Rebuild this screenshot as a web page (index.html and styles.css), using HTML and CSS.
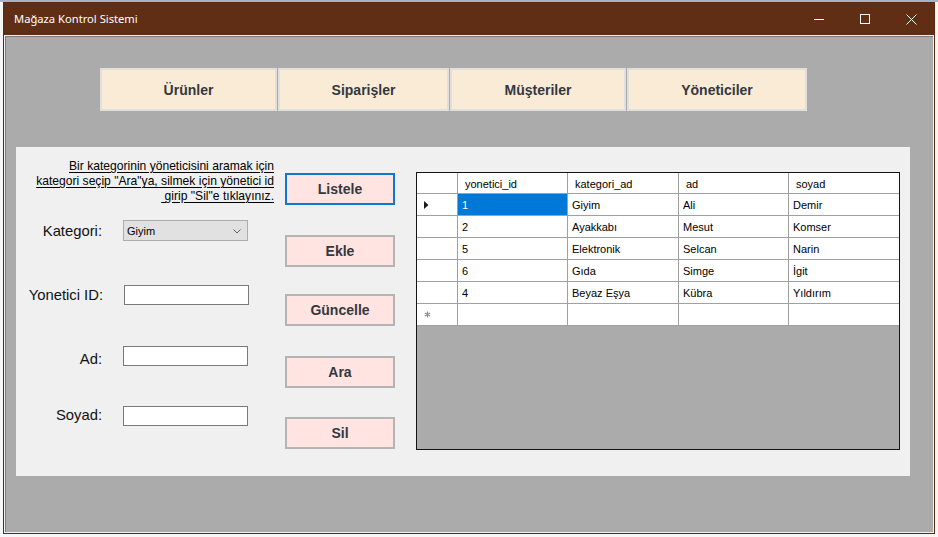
FILE: index.html
```html
<!DOCTYPE html>
<html lang="tr">
<head>
<meta charset="utf-8">
<title>Mağaza Kontrol Sistemi</title>
<link rel="stylesheet" href="styles.css">
</head>
<body>
<div class="window">
  <div class="titlebar">
    <span class="title">Mağaza Kontrol Sistemi</span>
    <div class="controls">
      <span class="ctl"><svg width="10" height="10" viewBox="0 0 10 10"><path d="M0 5.5H10" stroke="#fff" stroke-width="1" fill="none"/></svg></span>
      <span class="ctl"><svg width="10" height="10" viewBox="0 0 10 10"><rect x="0.5" y="0.5" width="9" height="9" stroke="#fff" stroke-width="1" fill="none"/></svg></span>
      <span class="ctl"><svg width="11" height="11" viewBox="0 0 11 11"><path d="M0.5 0.5L10.5 10.5M10.5 0.5L0.5 10.5" stroke="#fff" stroke-width="1" fill="none"/></svg></span>
    </div>
  </div>
  <div class="client">
    <div class="nav">
      <div class="nav-btn nb1">Ürünler</div>
      <div class="nav-btn nb2">Siparişler</div>
      <div class="nav-btn nb3">Müşteriler</div>
      <div class="nav-btn nb4">Yöneticiler</div>
    </div>
    <div class="panel">
      <div class="form-col">
        <p class="hint"><u>Bir kategorinin yöneticisini aramak için</u><br><u>kategori seçip "Ara"ya, silmek için yönetici id</u><br><u> girip "Sil"e tıklayınız.</u></p>
        <div class="row row-kat">
          <span class="lbl">Kategori:</span>
          <div class="combo"><span>Giyim</span><svg width="8" height="5" viewBox="0 0 8 5"><path d="M0.5 0.5L4 4L7.5 0.5" stroke="#606060" stroke-width="1" fill="none"/></svg></div>
        </div>
        <div class="row row-id">
          <span class="lbl lbl-id">Yonetici ID:</span>
          <div class="textbox tb-id"></div>
        </div>
        <div class="row row-ad">
          <span class="lbl lbl-low">Ad:</span>
          <div class="textbox"></div>
        </div>
        <div class="row row-soyad">
          <span class="lbl lbl-low2">Soyad:</span>
          <div class="textbox"></div>
        </div>
      </div>
      <div class="btn-col">
        <div class="act act-focus b-listele">Listele</div>
        <div class="act b-ekle">Ekle</div>
        <div class="act b-guncelle">Güncelle</div>
        <div class="act b-ara">Ara</div>
        <div class="act b-sil">Sil</div>
      </div>
      <div class="grid">
        <div class="cell rh"></div>
        <div class="cell hd">yonetici_id</div>
        <div class="cell hd">kategori_ad</div>
        <div class="cell hd">ad</div>
        <div class="cell hd last">soyad</div>

        <div class="cell rh"><svg width="5" height="8" viewBox="0 0 5 8"><path d="M0 0L4.5 4L0 8Z" fill="#1a1a1a"/></svg></div>
        <div class="cell sel">1</div>
        <div class="cell">Giyim</div>
        <div class="cell">Ali</div>
        <div class="cell last">Demir</div>

        <div class="cell rh"></div>
        <div class="cell">2</div>
        <div class="cell">Ayakkabı</div>
        <div class="cell">Mesut</div>
        <div class="cell last">Komser</div>

        <div class="cell rh"></div>
        <div class="cell">5</div>
        <div class="cell">Elektronik</div>
        <div class="cell">Selcan</div>
        <div class="cell last">Narin</div>

        <div class="cell rh"></div>
        <div class="cell">6</div>
        <div class="cell">Gıda</div>
        <div class="cell">Simge</div>
        <div class="cell last">İgit</div>

        <div class="cell rh"></div>
        <div class="cell">4</div>
        <div class="cell">Beyaz Eşya</div>
        <div class="cell">Kübra</div>
        <div class="cell last">Yıldırım</div>

        <div class="cell rh"><svg width="7" height="7" viewBox="0 0 7 7"><path d="M3.5 0.5V6.5M0.8 2L6.2 5M6.2 2L0.8 5" stroke="#8a8a8a" stroke-width="1.2" fill="none"/></svg></div>
        <div class="cell"></div>
        <div class="cell"></div>
        <div class="cell"></div>
        <div class="cell last"></div>
      </div>
    </div>
  </div>
</div>
</body>
</html>
```

FILE: styles.css
```css
* { box-sizing: border-box; }

html, body {
  margin: 0;
  padding: 0;
}

body {
  width: 938px;
  height: 537px;
  overflow: hidden;
  background: linear-gradient(#aab3c6 0 2px, #f6f6f6 2px);
  font-family: "Liberation Sans", Arial, sans-serif;
  padding: 2px 0 0 3px;
}

.window {
  width: 932px;
  height: 532px;
  border: 1px solid #5a2b12;
  background: #ababab;
  display: flex;
  flex-direction: column;
}

.titlebar {
  height: 32px;
  flex: none;
  background: #602e15;
  display: flex;
  align-items: center;
  justify-content: space-between;
}

.title {
  font-family: "Noto Sans", "Open Sans", sans-serif;
  font-size: 11.2px;
  color: #ffffff;
  padding-left: 10px;
  padding-bottom: 1px;
}

.controls {
  display: flex;
  height: 100%;
}

.ctl {
  width: 46px;
  height: 100%;
  display: flex;
  align-items: center;
  justify-content: center;
}

.client {
  flex: 1;
  border: 1px solid #efefef;
  box-shadow: inset 1px 1px 0 #7c7c7c;
  background: #ababab;
}

.nav {
  display: flex;
  margin-top: 32px;
  padding-left: 95px;
}

.nav-btn {
  height: 43px;
  background: #faebd7;
  border: 2px solid #e1dfdc;
  display: flex;
  align-items: center;
  justify-content: center;
  font-weight: bold;
  font-size: 14px;
  color: #333840;
}

.nb1 { width: 177px; }
.nb2 { width: 171px; margin-left: 1px; }
.nb3 { width: 176px; margin-left: 1px; }
.nb4 { width: 180px; margin-left: 1px; }

.panel {
  margin-top: 36px;
  margin-left: 11px;
  width: 894px;
  height: 329px;
  background: #f0f0f0;
  display: flex;
  align-items: flex-start;
}

.form-col {
  width: 258px;
  flex: none;
}

.hint {
  margin: 12px 0 0 0;
  font-size: 12.1px;
  line-height: 15px;
  text-align: right;
  color: #000;
  white-space: pre;
}

.hint u {
  text-decoration: underline;
  text-underline-offset: 2px;
}

.row {
  display: flex;
  align-items: center;
}

.row-kat { margin-top: 16px; height: 21px; }
.row-id { margin-top: 44px; height: 20px; }
.row-ad { margin-top: 41px; height: 20px; }
.row-soyad { margin-top: 40px; height: 20px; }

.lbl {
  width: 86px;
  text-align: right;
  font-size: 14.8px;
  color: #111;
  margin-right: 21px;
}

.lbl-id { margin-right: 21px; width: 88px; margin-left: -1px; }
.lbl-low { margin-top: 6px; }
.lbl-low2 { margin-bottom: 3px; }

.combo {
  width: 125px;
  height: 21px;
  background: #e1e1e1;
  border: 1px solid #adadad;
  display: flex;
  align-items: center;
  justify-content: space-between;
  padding: 1px 6px 0 3px;
  font-size: 11px;
  color: #000;
}

.textbox {
  width: 125px;
  height: 20px;
  background: #fff;
  border: 1px solid #7a7a7a;
}

.btn-col {
  width: 110px;
  margin-left: 11px;
  flex: none;
  display: flex;
  flex-direction: column;
}

.act {
  height: 32px;
  background: #ffe4e1;
  border: 2px solid #b4b4b4;
  display: flex;
  align-items: center;
  justify-content: center;
  font-weight: bold;
  font-size: 14px;
  color: #333840;
}

.act-focus { border-color: #0a78d4; }

.b-listele { margin-top: 26px; }
.b-ekle { margin-top: 30px; }
.b-guncelle { margin-top: 27px; }
.b-ara { margin-top: 30px; }
.b-sil { margin-top: 29px; }

.grid {
  margin-left: 21px;
  margin-top: 25px;
  width: 484px;
  height: 278px;
  border: 1px solid #141414;
  background: #ababab;
  display: grid;
  grid-template-columns: 41px 110px 111px 110px 110px;
  grid-template-rows: 21px repeat(6, 22px);
  align-content: start;
  font-size: 11px;
  color: #000;
}

.cell {
  background: #fff;
  border-right: 1px solid #a0a0a0;
  border-bottom: 1px solid #a0a0a0;
  display: flex;
  align-items: center;
  padding-left: 4px;
  white-space: nowrap;
  overflow: hidden;
}

.cell.last { border-right: none; }

.hd { padding-left: 7px; padding-top: 1px; }

.rh { padding-left: 7px; }

.sel {
  background: #0078d7;
  color: #fff;
}
```
